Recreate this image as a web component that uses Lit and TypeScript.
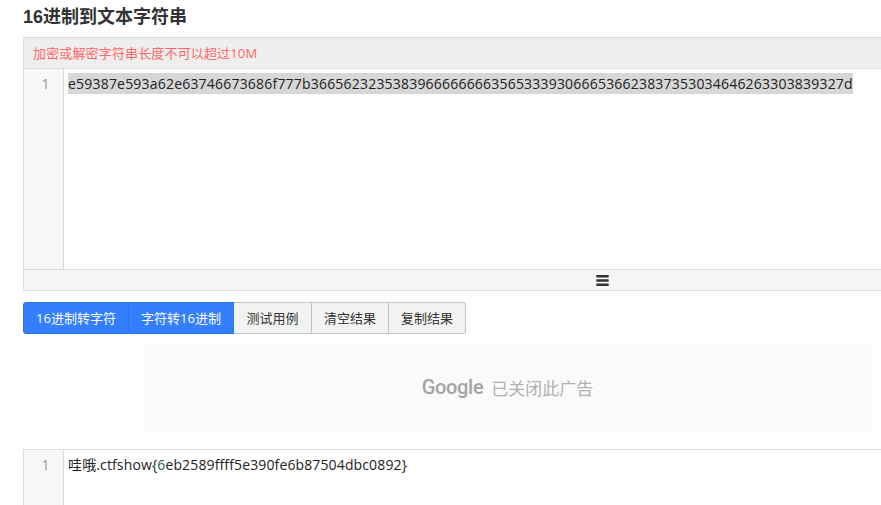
import { LitElement, html, css } from "lit";
import { customElement } from "lit/decorators.js";

const HEX = "e59387e593a62e63746673686f777b" + "36656232353839666666663565333930666536623837353034646263303839327d";

@customElement("app-root")
export class AppRoot extends LitElement {
  static styles = css`
    :host {
      display: block;
      width: 881px;
      height: 505px;
      overflow: hidden;
      background: #fff;
      font-family: "Open Sans", "Noto Sans CJK SC", sans-serif;
      font-size: 14px;
      color: #333;
    }
    .page {
      width: 1181px;
      padding: 0 0 0 23px;
      box-sizing: border-box;
      display: flex;
      flex-direction: column;
    }
    h1 {
      margin: 0;
      height: 37px;
      padding-top: 6px;
      box-sizing: border-box;
      font-size: 18px;
      line-height: 22px;
      font-weight: 700;
      color: #333;
      font-family: "Liberation Sans", "Noto Sans CJK SC", sans-serif;
    }
    .box {
      border: 1px solid #ddd;
      border-right: none;
      display: flex;
      flex-direction: column;
    }
    .hint {
      height: 30px;
      background: #eee;
      border-bottom: 1px solid #ddd;
      color: #ff6666;
      font-size: 13px;
      letter-spacing: 0.15px;
      line-height: 30px;
      padding-left: 9px;
    }
    .editor {
      display: flex;
      height: 200px;
    }
    .gutter {
      width: 40px;
      background: #f7f7f7;
      border-right: 1px solid #ddd;
      color: #999;
      text-align: center;
      line-height: 30px;
      font-size: 14px;
      padding-left: 4px;
      box-sizing: border-box;
      flex: none;
    }
    .code {
      padding: 4px 0 0 4px;
      color: #222;
      line-height: 22px;
      white-space: nowrap;
    }
    .sel {
      background: #d7d7d7;
      display: inline-block;
      height: 21px;
      letter-spacing: 0.2px;
    }
    .resize {
      height: 20px;
      background: #f5f5f5;
      border-top: 1px solid #ddd;
      display: flex;
      align-items: center;
      justify-content: center;
    }
    .resize svg {
      display: block;
    }
    .btns {
      display: flex;
      margin-top: 11px;
      height: 32px;
    }
    button {
      font: inherit;
      font-size: 13px;
      height: 32px;
      padding: 0 0 1px;
      border: 1px solid #c4c4c4;
      border-left: none;
      background: #f2f2f2;
      color: #333;
      margin: 0;
      width: 77px;
      box-sizing: border-box;
    }
    button.wide {
      width: 78px;
    }
    button:last-child {
      border-radius: 0 3px 3px 0;
    }
    button.primary {
      background: #337fff;
      border-color: #2a74ee;
      color: #fff;
      width: 105px;
    }
    button:first-child {
      width: 106px;
      border-left: 1px solid #2a74ee;
      border-radius: 3px 0 0 3px;
    }
    .ad {
      margin: 10px 0 16px 121px;
      width: 728px;
      height: 89px;
      background: #fafafa;
      display: flex;
      align-items: center;
      justify-content: center;
      gap: 8px;
      color: #b0b0b0;
      font-size: 17px;
      padding: 0 1px 3px 0;
      box-sizing: border-box;
    }
    .g {
      font-family: "Roboto", sans-serif;
      font-size: 20px;
      font-weight: 500;
      letter-spacing: -0.3px;
      color: #a4a4a4;
    }
    .result .editor {
      height: 60px;
    }
    .result .code {
      padding-top: 4px;
      letter-spacing: 0.13px;
    }
    .teal {
      color: #116644;
    }
  `;

  render() {
    return html`
      <div class="page">
        <h1>16进制到文本字符串</h1>
        <div class="box">
          <div class="hint">加密或解密字符串长度不可以超过10M</div>
          <div class="editor">
            <div class="gutter">1</div>
            <div class="code"><span class="sel">${HEX}</span></div>
          </div>
          <div class="resize">
            <svg width="13" height="11" viewBox="0 0 13 11">
              <rect x="0.3" y="0" width="12.4" height="2.4" rx="0.4" fill="#333"></rect>
              <rect x="0.3" y="4.3" width="12.4" height="2.4" rx="0.4" fill="#333"></rect>
              <rect x="0.3" y="8.6" width="12.4" height="2.4" rx="0.4" fill="#333"></rect>
            </svg>
          </div>
        </div>
        <div class="btns">
          <button class="primary">16进制转字符</button>
          <button class="primary">字符转16进制</button>
          <button class="wide">测试用例</button>
          <button>清空结果</button>
          <button>复制结果</button>
        </div>
        <div class="ad"><span class="g">Google</span><span>已关闭此广告</span></div>
        <div class="box result">
          <div class="editor">
            <div class="gutter">1</div>
            <div class="code">哇哦.ctfshow{<span class="teal">6</span>eb2589ffff5e390fe6b87504dbc0892}</div>
          </div>
        </div>
      </div>
    `;
  }
}
